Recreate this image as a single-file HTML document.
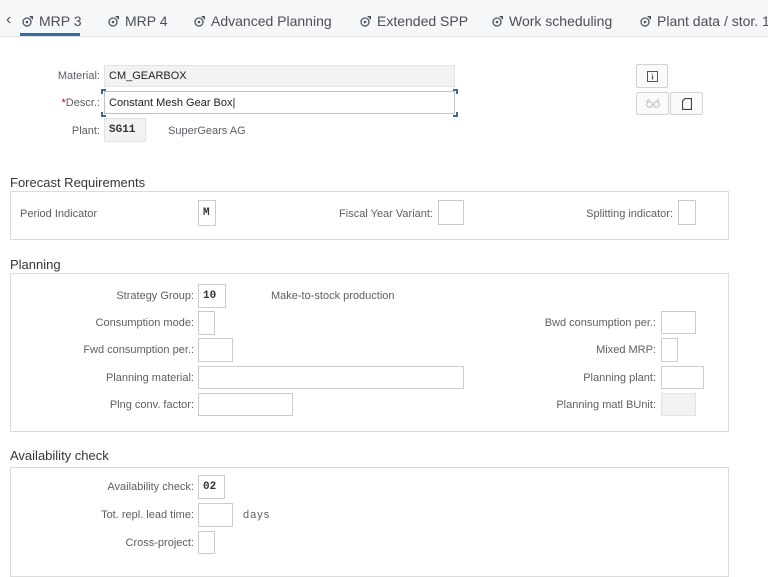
<!DOCTYPE html>
<html><head><meta charset="utf-8"><style>
*{box-sizing:border-box;margin:0;padding:0}
body{width:768px;height:564px;overflow:hidden;background:#fff;font-family:"Liberation Sans",sans-serif;color:#32363a;position:relative}
.a{position:absolute}
.tabs{left:0;top:0;width:768px;height:37px;background:#f5f7f9;border-bottom:1px solid #dde3ea}
.tab{position:absolute;top:13px;font-size:14px;color:#4a4f55;white-space:nowrap}
.tab svg{margin-right:5px;vertical-align:-1px}
.ul{left:20px;top:33px;width:60px;height:3px;background:#3f6a94}
.lbl{position:absolute;font-size:11px;color:#5a5f66;white-space:nowrap}
.r{text-align:right}
.f{position:absolute;border:1px solid #c8ccd0;background:#fff;font-family:"Liberation Mono",monospace;font-size:11px;font-weight:bold;color:#333;padding:0 4px;display:flex;align-items:center}
.s{font-family:"Liberation Sans",sans-serif;font-weight:normal;color:#222}
.g{background:#f2f2f2;border-color:#e2e2e2}
.box{position:absolute;left:10px;width:719px;border:1px solid #dadcde}
.h{position:absolute;left:10px;font-size:13px;color:#32363a}
.btn{position:absolute;border:1px solid #d0d4d8;background:#fafafa;border-radius:2px;font-size:10px;color:#555;display:flex;align-items:center;justify-content:center}
</style></head><body>
<div class="a tabs"></div>
<div class="tab" style="left:6px;top:11px;font-size:16px">&lsaquo;</div>
<div class="tab" style="left:22px"><svg width="12" height="12" viewBox="0 0 12 12"><circle cx="5" cy="7" r="4" fill="none" stroke="#4a5866" stroke-width="1.3"/><circle cx="5" cy="7" r="1.3" fill="#4a5866"/><path d="M7 1h4v4z" fill="#4a5866"/></svg>MRP 3</div>
<div class="tab" style="left:108px"><svg width="12" height="12" viewBox="0 0 12 12"><circle cx="5" cy="7" r="4" fill="none" stroke="#4a5866" stroke-width="1.3"/><circle cx="5" cy="7" r="1.3" fill="#4a5866"/><path d="M7 1h4v4z" fill="#4a5866"/></svg>MRP 4</div>
<div class="tab" style="left:194px"><svg width="12" height="12" viewBox="0 0 12 12"><circle cx="5" cy="7" r="4" fill="none" stroke="#4a5866" stroke-width="1.3"/><circle cx="5" cy="7" r="1.3" fill="#4a5866"/><path d="M7 1h4v4z" fill="#4a5866"/></svg>Advanced Planning</div>
<div class="tab" style="left:360px"><svg width="12" height="12" viewBox="0 0 12 12"><circle cx="5" cy="7" r="4" fill="none" stroke="#4a5866" stroke-width="1.3"/><circle cx="5" cy="7" r="1.3" fill="#4a5866"/><path d="M7 1h4v4z" fill="#4a5866"/></svg>Extended SPP</div>
<div class="tab" style="left:492px"><svg width="12" height="12" viewBox="0 0 12 12"><circle cx="5" cy="7" r="4" fill="none" stroke="#4a5866" stroke-width="1.3"/><circle cx="5" cy="7" r="1.3" fill="#4a5866"/><path d="M7 1h4v4z" fill="#4a5866"/></svg>Work scheduling</div>
<div class="tab" style="left:640px"><svg width="12" height="12" viewBox="0 0 12 12"><circle cx="5" cy="7" r="4" fill="none" stroke="#4a5866" stroke-width="1.3"/><circle cx="5" cy="7" r="1.3" fill="#4a5866"/><path d="M7 1h4v4z" fill="#4a5866"/></svg>Plant data / stor. 1</div>
<div class="a ul"></div>

<div class="lbl r" style="left:20px;width:80px;top:70px">Material:</div>
<div class="f g s" style="left:104px;top:65px;width:351px;height:22px">CM_GEARBOX</div>
<div class="lbl r" style="left:20px;width:80px;top:97px"><span style="color:#c00">*</span>Descr.:</div>
<div class="f s" style="left:104px;top:91px;width:351px;height:23px;border-color:#b8c4d0">Constant Mesh Gear Box|</div>
<div class="a" style="left:101px;top:89px;width:5px;height:5px;border-left:2px solid #3f6a94;border-top:2px solid #3f6a94"></div>
<div class="a" style="left:101px;top:112px;width:5px;height:5px;border-left:2px solid #3f6a94;border-bottom:2px solid #3f6a94"></div>
<div class="a" style="left:453px;top:89px;width:5px;height:5px;border-right:2px solid #3f6a94;border-top:2px solid #3f6a94"></div>
<div class="a" style="left:453px;top:112px;width:5px;height:5px;border-right:2px solid #3f6a94;border-bottom:2px solid #3f6a94"></div>
<div class="lbl r" style="left:20px;width:80px;top:125px">Plant:</div>
<div class="f g" style="left:104px;top:118px;width:42px;height:24px">SG11</div>
<div class="lbl" style="left:168px;top:125px">SuperGears AG</div>
<div class="btn" style="left:636px;top:64px;width:32px;height:24px"><svg width="11" height="11" viewBox="0 0 11 11"><rect x="0.5" y="0.5" width="10" height="10" fill="none" stroke="#555"/><path d="M5.5 2.5v1M5.5 4.5v4" stroke="#555" stroke-width="1.3"/></svg></div>
<div class="btn" style="left:636px;top:92px;width:33px;height:23px"><svg width="14" height="9" viewBox="0 0 14 9"><circle cx="3.5" cy="5.5" r="2.8" fill="none" stroke="#bbb"/><circle cx="10.5" cy="5.5" r="2.8" fill="none" stroke="#bbb"/><path d="M1 3L3 0M13 3L11 0" stroke="#bbb"/></svg></div>
<div class="btn" style="left:670px;top:92px;width:33px;height:23px"><svg width="10" height="12" viewBox="0 0 10 12"><path d="M3 .5h6.5v11H.5V3z" fill="none" stroke="#444" stroke-width="1.2"/></svg></div>

<div class="h" style="top:175px">Forecast Requirements</div>
<div class="box" style="top:191px;height:49px"></div>
<div class="lbl" style="left:20px;top:208px">Period Indicator</div>
<div class="f" style="left:198px;top:200px;width:18px;height:26px">M</div>
<div class="lbl r" style="left:300px;width:133px;top:208px">Fiscal Year Variant:</div>
<div class="f" style="left:438px;top:200px;width:26px;height:25px"></div>
<div class="lbl r" style="left:540px;width:133px;top:208px">Splitting indicator:</div>
<div class="f" style="left:678px;top:200px;width:18px;height:25px"></div>

<div class="h" style="top:257px">Planning</div>
<div class="box" style="top:273px;height:159px"></div>
<div class="lbl r" style="left:40px;width:154px;top:290px">Strategy Group:</div>
<div class="f" style="left:198px;top:284px;width:28px;height:24px">10</div>
<div class="lbl" style="left:271px;top:290px">Make-to-stock production</div>
<div class="lbl r" style="left:40px;width:154px;top:317px">Consumption mode:</div>
<div class="f" style="left:198px;top:311px;width:17px;height:24px"></div>
<div class="lbl r" style="left:40px;width:154px;top:344px">Fwd consumption per.:</div>
<div class="f" style="left:198px;top:338px;width:35px;height:24px"></div>
<div class="lbl r" style="left:40px;width:154px;top:372px">Planning material:</div>
<div class="f" style="left:198px;top:366px;width:266px;height:23px"></div>
<div class="lbl r" style="left:40px;width:154px;top:399px">Plng conv. factor:</div>
<div class="f" style="left:198px;top:393px;width:95px;height:23px"></div>
<div class="lbl r" style="left:480px;width:176px;top:317px">Bwd consumption per.:</div>
<div class="f" style="left:661px;top:311px;width:35px;height:23px"></div>
<div class="lbl r" style="left:480px;width:176px;top:344px">Mixed MRP:</div>
<div class="f" style="left:661px;top:338px;width:17px;height:24px"></div>
<div class="lbl r" style="left:480px;width:176px;top:372px">Planning plant:</div>
<div class="f" style="left:661px;top:366px;width:43px;height:23px"></div>
<div class="lbl r" style="left:480px;width:176px;top:399px">Planning matl BUnit:</div>
<div class="f g" style="left:661px;top:393px;width:35px;height:23px"></div>

<div class="h" style="top:448px">Availability check</div>
<div class="box" style="top:467px;height:110px"></div>
<div class="lbl r" style="left:40px;width:154px;top:481px">Availability check:</div>
<div class="f" style="left:198px;top:475px;width:27px;height:24px">02</div>
<div class="lbl r" style="left:40px;width:154px;top:509px">Tot. repl. lead time:</div>
<div class="f" style="left:198px;top:503px;width:35px;height:24px"></div>
<div class="lbl" style="left:243px;top:509px;letter-spacing:1px">days</div>
<div class="lbl r" style="left:40px;width:154px;top:537px">Cross-project:</div>
<div class="f" style="left:198px;top:531px;width:17px;height:23px"></div>
</body></html>
